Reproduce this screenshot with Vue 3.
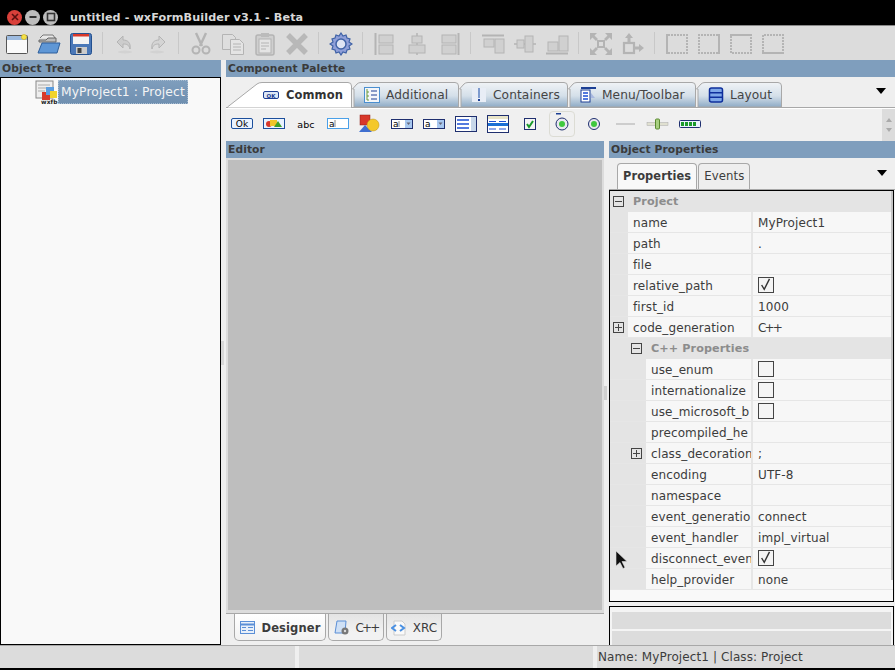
<template>
  <div class="win">
    <div class="titlebar">
      <span class="wbtn close"><svg width="14" height="14" viewBox="0 0 14 14"><path d="M4 4l6 6M10 4l-6 6" stroke="#5a0f0f" stroke-width="1.6"/></svg></span>
      <span class="wbtn"><svg width="14" height="14" viewBox="0 0 14 14"><path d="M3.5 7h7" stroke="#333" stroke-width="2"/></svg></span>
      <span class="wbtn"><svg width="14" height="14" viewBox="0 0 14 14"><rect x="3.5" y="3.5" width="7" height="7" fill="none" stroke="#333" stroke-width="1.6"/></svg></span>
      <span class="title">untitled - wxFormBuilder v3.1 - Beta</span>
    </div>

    <div class="toolbar">
      <template v-for="(t, i) in tools" :key="i">
        <span v-if="t === '|'" class="sep"></span>
        <span v-else class="tool">
          <svg width="24" height="24" viewBox="0 0 24 24" v-html="toolIcons[t]"></svg>
        </span>
      </template>
    </div>

    <div class="main">
      <div class="left">
        <div class="phead">Object Tree</div>
        <div class="tree">
          <div class="tree-row">
            <svg class="tree-ico" width="24" height="24" viewBox="0 0 24 24">
              <rect x="1" y="1" width="17" height="17" fill="#eee" stroke="#888"/>
              <path d="M3 5h12M3 8h12M3 11h7" stroke="#aaa"/>
              <rect x="7" y="12" width="8" height="8" fill="#d8382a"/>
              <rect x="11" y="7" width="8" height="8" fill="#5a9de0"/>
              <rect x="15" y="11" width="7" height="7" fill="#f2d42a"/>
              <text x="6" y="24" font-size="6" font-weight="bold" font-family="DejaVu Sans" fill="#222">wxfb</text>
            </svg>
            <span class="tree-label">MyProject1 : Project</span>
          </div>
        </div>
      </div>

      <div class="vsplit"><i></i></div>

      <div class="right">
        <div class="phead">Component Palette</div>
        <div class="ptabs">
          <div v-for="t in paletteTabs" :key="t.name" class="ptab" :class="{ on: t.on }" :style="{ width: t.w + 'px' }">
            <svg class="tabshape" :width="t.w" height="27" :viewBox="`0 0 ${t.w} 27`">
              <defs>
                <linearGradient id="tabg" x1="0" y1="0" x2="0" y2="1">
                  <stop offset="0" stop-color="#f0f3f6"/>
                  <stop offset="0.55" stop-color="#d4dfe9"/>
                  <stop offset="1" stop-color="#8eabc6"/>
                </linearGradient>
              </defs>
              <path v-if="t.on" :d="`M0.5 26 L30 3 Q32 1.5 35 1.5 H${t.w - 4} Q${t.w - 0.5} 1.5 ${t.w - 0.5} 5 V27 H0.5 Z`" fill="#fff" stroke="#a8a8a8"/>
              <path v-else :d="`M0.5 8 L5 3 Q6.5 1.5 9 1.5 H${t.w - 4} Q${t.w - 0.5} 1.5 ${t.w - 0.5} 5 V26 H2 V8 Z`" fill="url(#tabg)" stroke="#a8a8a8"/>
            </svg>
            <svg class="tabico" width="16" height="16" viewBox="0 0 16 16" v-html="t.icon"></svg>
            <span class="tabtxt">{{ t.name }}</span>
          </div>
          <span class="tri pal-tri"></span>
        </div>
        <div class="palette">
          <span v-for="(p, i) in palIcons" :key="i" class="pal" :class="{ pressed: i === 10 }">
            <svg width="24" height="24" viewBox="-1 0 24 24" v-html="p"></svg>
          </span>
          <div class="palscroll"><span class="up"></span><span class="down"></span></div>
        </div>

        <div class="lower">
          <div class="editor">
            <div class="phead">Editor</div>
            <div class="canvas"></div>
            <div class="btabs">
              <div class="btab on" style="width: 92px">
                <svg width="16" height="14" viewBox="0 0 16 14"><rect x=".5" y=".5" width="14" height="12" fill="#e8f0fa" stroke="#5b8fd6"/><path d="M.5 3.5h14" stroke="#5b8fd6" stroke-width="2"/><path d="M2 6.5h4M2 9.5h4M8 6.5h5M8 9.5h5" stroke="#5b8fd6"/></svg>
                <b>Designer</b>
              </div>
              <div class="btab" style="width: 56px">
                <svg width="16" height="16" viewBox="0 0 16 16"><path d="M3 1h9l-1 12H1z" fill="#cfe0f5" stroke="#5b8fd6"/><circle cx="11" cy="11" r="3.5" fill="#777"/><circle cx="11" cy="11" r="1.2" fill="#ddd"/></svg>
                <span class="narrow">C++</span>
              </div>
              <div class="btab" style="width: 56px">
                <svg width="16" height="16" viewBox="0 0 16 16"><path d="M3 1h8l3 3v11H3z" fill="#fafafa" stroke="#ccc"/><path d="M5 5L1 8l4 3M9 5l4 3-4 3" fill="none" stroke="#4a90e2" stroke-width="2"/></svg>
                <span>XRC</span>
              </div>
            </div>
          </div>

          <div class="hsplit"><i></i></div>

          <div class="props">
            <div class="phead">Object Properties</div>
            <div class="prop-tabs">
              <div class="ptb on">Properties</div>
              <div class="ptb">Events</div>
              <span class="tri prop-tri"></span>
            </div>
            <div class="grid">
              <div v-for="r in rows" :key="r.name" class="row" :class="[`lv${r.lv}`, { cat: r.cat }]">
                <span class="gut">
                  <span v-if="r.exp" class="exp">
                    <svg width="11" height="11" viewBox="0 0 11 11"><rect x=".5" y=".5" width="10" height="10" fill="none" stroke="#444"/><path d="M2 5.5h7" stroke="#444"/><path v-if="r.exp === '+'" d="M5.5 2v7" stroke="#444"/></svg>
                  </span>
                </span>
                <span class="name">{{ r.name }}</span>
                <span v-if="!r.cat" class="val" :class="{ narrow: r.val === 'C++' }">
                  <span v-if="r.chk !== undefined" class="chk">
                    <svg v-if="r.chk" width="16" height="16" viewBox="0 0 16 16"><path d="M3 8l3 5 6-12" fill="none" stroke="#333" stroke-width="1.6"/></svg>
                  </span>
                  <template v-else>{{ r.val }}</template>
                </span>
              </div>
              <i class="gridbar"></i>
            </div>
            <div class="desc">
              <div class="d1"></div>
              <div class="d2"></div>
            </div>
          </div>
        </div>
      </div>
    </div>

    <div class="status">
      <div class="sb s1"></div>
      <div class="sb s2"></div>
      <div class="sb s3">Name: MyProject1 | Class: Project</div>
    </div>

    <svg class="cursor" width="14" height="20" viewBox="0 0 14 20"><path d="M1 1v15l4-3.5 3 6 2-1-3-6h5z" fill="#111" stroke="#ddd" stroke-width=".6"/></svg>
  </div>
</template>

<script setup>
const g = '#b4b4b4'
const align = (inner) => `<g fill="#d0d0d0" stroke="${g}">${inner}</g>`

const toolIcons = {
  new: `<rect x="1.5" y="3.5" width="21" height="18" rx="1" fill="#fafafa" stroke="#555"/><rect x="2" y="4" width="20" height="4" fill="#9dbbe0"/><circle cx="19" cy="5" r="2.6" fill="#f4e04a" stroke="#c9a800" stroke-width=".5"/>`,
  open: `<path d="M3 6l3-3h10l2 3" fill="#e8e8e8" stroke="#777"/><path d="M2 8h7l2-2h8v4H2z" fill="#bbb" stroke="#666"/><path d="M5 11h18l-3 10H1z" fill="#5f97d6" stroke="#2e5f9c"/>`,
  save: `<rect x="1.5" y="1.5" width="21" height="21" rx="2" fill="#4a78b8" stroke="#23508f"/><rect x="4" y="2" width="16" height="10" fill="#f4f4f4"/><rect x="4" y="2" width="16" height="2.5" fill="#d8382a"/><rect x="7" y="15" width="11" height="7" fill="#ccc"/><rect x="8.5" y="16" width="4" height="5" fill="#444"/>`,
  undo: `<path d="M10 4L4 10l6 6v-4c4 0 6 1 7 5 1-6-2-9-7-9z" fill="#ccc" stroke="${g}"/><ellipse cx="12" cy="20" rx="7" ry="1.5" fill="#d2d2d2"/>`,
  redo: `<path d="M14 4l6 6-6 6v-4c-4 0-6 1-7 5-1-6 2-9 7-9z" fill="#d4d4d4" stroke="${g}"/><ellipse cx="12" cy="20" rx="7" ry="1.5" fill="#d2d2d2"/>`,
  cut: `<path d="M7 1l6 13M17 1l-6 13" stroke="${g}" stroke-width="2.4" fill="none"/><circle cx="7" cy="18" r="3.5" fill="none" stroke="${g}" stroke-width="2"/><circle cx="17" cy="18" r="3.5" fill="none" stroke="${g}" stroke-width="2"/>`,
  copy: `<path d="M1.5 2.5h10l3 3v12h-13z" fill="#dedede" stroke="${g}"/><path d="M9.5 7.5h9l4 4v11h-13z" fill="#e4e4e4" stroke="${g}"/><path d="M12 12h8M12 15h8M12 18h8" stroke="${g}"/>`,
  paste: `<rect x="3" y="3" width="18" height="20" rx="2" fill="#cfcfcf" stroke="${g}" stroke-width="1.5"/><rect x="6" y="7" width="12" height="14" fill="#e4e4e4" stroke="${g}"/><rect x="8" y="1" width="8" height="4" fill="#bbb"/><path d="M8 11h8M8 14h8M8 17h5" stroke="${g}"/>`,
  del: `<path d="M3 3l18 18M21 3L3 21" stroke="#b8b8b8" stroke-width="5.4"/>`,
  gear: `<path d="M12 1l2 3 3-1 1 3 3 1-1 3 3 2-3 2 1 3-3 1-1 3-3-1-2 3-2-3-3 1-1-3-3-1 1-3-3-2 3-2-1-3 3-1 1-3 3 1z" fill="#8f9fd8" stroke="#3f62a6" stroke-width="1.2"/><circle cx="12" cy="12" r="5" fill="#dde3f3" stroke="#3f62a6" stroke-width="1.5"/>`,
  al1: align(`<path d="M2.5 1v22" stroke-width="2"/><rect x="6" y="3" width="14" height="8"/><rect x="6" y="13" width="14" height="9"/>`),
  al2: align(`<path d="M12 1v22" stroke-width="1.5"/><rect x="7" y="4" width="10" height="7"/><rect x="4" y="13" width="16" height="8"/>`),
  al3: align(`<path d="M21.5 1v22" stroke-width="2"/><rect x="5" y="3" width="14" height="8"/><rect x="5" y="13" width="14" height="9"/>`),
  al4: align(`<path d="M1 3.5h22" stroke-width="2"/><rect x="3" y="7" width="10" height="8"/><rect x="14" y="7" width="9" height="14"/>`),
  al5: align(`<path d="M1 12h22" stroke-width="1.5"/><rect x="4" y="8" width="7" height="8"/><rect x="12" y="4" width="8" height="16"/>`),
  al6: align(`<path d="M1 21.5h22" stroke-width="2"/><rect x="3" y="10" width="10" height="9"/><rect x="14" y="4" width="9" height="15"/>`),
  expand: `<rect x="9" y="9" width="6" height="6" fill="none" stroke="${g}" stroke-width="2"/><path d="M1 1h7L5.5 3.5 9 7 7 9 3.5 5.5 1 8zM23 1h-7l2.5 2.5L15 7l2 2 3.5-3.5L23 8zM1 23h7l-2.5-2.5L9 17l-2-2-3.5 3.5L1 16zM23 23h-7l2.5-2.5L15 17l2-2 3.5 3.5L23 16z" fill="${g}"/>`,
  stretch: `<rect x="3" y="11" width="10" height="10" fill="none" stroke="${g}" stroke-width="2.2"/><path d="M8 1l4 5H9.5v4h-3V6H4zM23 16l-5 4v-2.5h-4v-3h4V12z" fill="${g}"/>`,
  bl: `<path d="M2 2v20" fill="none" stroke="${g}" stroke-width="2"/><path d="M3 3h19v18H3" fill="none" stroke="${g}" stroke-width="2" stroke-dasharray="2 1"/>`,
  br: `<path d="M22 2v20" fill="none" stroke="${g}" stroke-width="2"/><path d="M21 3H2v18h19" fill="none" stroke="${g}" stroke-width="2" stroke-dasharray="2 1"/>`,
  bt: `<path d="M1 3h22" fill="none" stroke="${g}" stroke-width="2"/><path d="M2 4v17h20V4" fill="none" stroke="${g}" stroke-width="2" stroke-dasharray="2 1"/>`,
  bb: `<path d="M1 21h22" fill="none" stroke="${g}" stroke-width="2"/><path d="M2 20V3h20v17" fill="none" stroke="${g}" stroke-width="2" stroke-dasharray="2 1"/>`
}

const tools = ['new', 'open', 'save', '|', 'undo', 'redo', '|', 'cut', 'copy', 'paste', 'del', '|', 'gear', '|', 'al1', 'al2', 'al3', '|', 'al4', 'al5', 'al6', '|', 'expand', 'stretch', '|', 'bl', 'br', 'bt', 'bb']

const paletteTabs = [
  { name: 'Common', w: 125, on: true, icon: `<rect x=".5" y="4.5" width="15" height="7" rx="1.5" fill="#dde8f6" stroke="#1c3f94"/><text x="8" y="10.5" font-size="5.5" text-anchor="middle" font-family="DejaVu Sans" fill="#1c3f94">OK</text>` },
  { name: 'Additional', w: 107, icon: `<rect x=".5" y=".5" width="15" height="15" fill="#f4f6fa" stroke="#4a8fd0"/><path d="M3 2v11h2M3 5h2M3 9h2" fill="none" stroke="#6a9a3a"/><path d="M7 4h6M7 8h6M7 12h6" stroke="#1c3f94"/>` },
  { name: 'Containers', w: 109, icon: `<rect x="1" y="1" width="14" height="14" fill="#e8edf6"/><path d="M8 1v10" stroke="#5b7fc0" stroke-width="1.5"/><path d="M7 12h2v2H7z" fill="#1c3f94"/>` },
  { name: 'Menu/Toolbar', w: 128, icon: `<rect x="1" y="0" width="16" height="2" fill="#1c3f94"/><rect x="1" y="3" width="9" height="12" fill="#fff" stroke="#1c3f94"/><path d="M3 6h5M3 9h5M3 12h5" stroke="#1c4fd4" stroke-width="1.5"/><path d="M11 6l4 5h-4z" fill="#a8b8e0"/>` },
  { name: 'Layout', w: 86, icon: `<rect x="1.5" y="1" width="13" height="14" rx="2" fill="#7fa8e8" stroke="#0f2f9c" stroke-width="1.5"/><path d="M2 5.7h12M2 10.3h12" stroke="#0f2f9c" stroke-width="1.5"/>` }
]

const dk = '#1f2f6f'
const palIcons = [
  `<rect x=".5" y="6.5" width="21" height="10" rx="1.5" fill="#eaf3ff" stroke="#1c4f9c"/><text x="11" y="15" font-size="9" text-anchor="middle" font-family="DejaVu Sans">Ok</text>`,
  `<rect x=".5" y="6.5" width="21" height="10" fill="#eaf3ff" stroke="#1c4f9c"/><circle cx="6" cy="12" r="3" fill="#d8382a"/><rect x="7" y="8" width="7" height="6" fill="#f2c42a"/><path d="M11 15l4-6 4 6z" fill="#3fa02a"/>`,
  `<text x="11" y="15.5" font-size="9.5" text-anchor="middle" font-family="DejaVu Sans">abc</text>`,
  `<rect x=".5" y="6.5" width="21" height="10" fill="#fff" stroke="#4aa0e8"/><text x="2" y="15" font-size="9" font-family="DejaVu Sans">a</text><path d="M8 8v7" stroke="#888"/>`,
  `<rect x="1" y="3" width="10" height="10" fill="#d8382a" stroke="#8c1e14" stroke-width=".5"/><path d="M0 20l6-7 7 7z" fill="#3f6fd0"/><circle cx="14" cy="13" r="6" fill="#f4c82a" stroke="#b88f10" stroke-width=".5"/>`,
  `<rect x=".5" y="7.5" width="21" height="9" fill="#fff" stroke="${dk}"/><text x="2" y="15" font-size="9" font-family="DejaVu Sans">a</text><path d="M8 9v6" stroke="#888"/><rect x="14" y="8" width="7" height="8" fill="#a8c8f0"/><path d="M15.5 10.5h4l-2 2.5z" fill="#667"/>`,
  `<rect x=".5" y="7.5" width="21" height="9" fill="#fff" stroke="${dk}"/><text x="2" y="15" font-size="9" font-family="DejaVu Sans">a</text><rect x="14" y="8" width="7" height="8" fill="#a8c8f0"/><path d="M15.5 10.5h4l-2 2.5z" fill="#667"/>`,
  `<rect x=".5" y="4.5" width="21" height="15" fill="#fff" stroke="${dk}"/><path d="M2 8h12M2 12h12M2 16h12" stroke="#1c4fd4" stroke-width="1.3"/><rect x="16" y="5" width="5" height="14" fill="#c8d8ea"/>`,
  `<rect x=".5" y="3.5" width="21" height="17" fill="#fff" stroke="${dk}"/><rect x="1" y="4" width="20" height="3" fill="#e8e4c8"/><rect x="1" y="11" width="20" height="3" fill="#1c6fd4"/><path d="M2 9.5h7M12 9.5h7M2 17h7M12 17h7" stroke="#1c4fd4"/>`,
  `<rect x="5.5" y="6.5" width="11" height="11" fill="#f4f4f4" stroke="${dk}"/><path d="M8 12l2 3 4-6" fill="none" stroke="#1a9a2a" stroke-width="2"/>`,
  `<rect x="5" y="1" width="5" height="1.5" fill="#1c3f94"/><circle cx="11" cy="12" r="6" fill="#e8e8f0" stroke="${dk}"/><circle cx="11" cy="12" r="3" fill="#3fc83f"/>`,
  `<circle cx="11" cy="12" r="5.5" fill="#e8e8f0" stroke="${dk}"/><circle cx="11" cy="12" r="3" fill="#3fc83f"/>`,
  `<path d="M1 12h19" stroke="#aaa"/>`,
  `<rect x="0" y="10.5" width="21" height="3" fill="#e0e0d0" stroke="#aaa" stroke-width=".5"/><rect x="8.5" y="7" width="4" height="10" rx="1" fill="#a8d080" stroke="#5a8a30"/>`,
  `<rect x=".5" y="8.5" width="21" height="7" rx="1" fill="#eaf3ff" stroke="${dk}"/><rect x="2" y="10" width="3" height="4" fill="#1a9a2a"/><rect x="6" y="10" width="3" height="4" fill="#1a9a2a"/><rect x="10" y="10" width="3" height="4" fill="#1a9a2a"/><rect x="14" y="10" width="3" height="4" fill="#1a9a2a"/>`
]

const rows = [
  { name: 'Project', lv: 0, cat: true, exp: '-' },
  { name: 'name', lv: 1, val: 'MyProject1' },
  { name: 'path', lv: 1, val: '.' },
  { name: 'file', lv: 1, val: '' },
  { name: 'relative_path', lv: 1, chk: true },
  { name: 'first_id', lv: 1, val: '1000' },
  { name: 'code_generation', lv: 1, val: 'C++', exp: '+' },
  { name: 'C++ Properties', lv: 1, cat: true, exp: '-' },
  { name: 'use_enum', lv: 2, chk: false },
  { name: 'internationalize', lv: 2, chk: false },
  { name: 'use_microsoft_b', lv: 2, chk: false },
  { name: 'precompiled_he', lv: 2, val: '' },
  { name: 'class_decoration', lv: 2, val: ';', exp: '+' },
  { name: 'encoding', lv: 2, val: 'UTF-8' },
  { name: 'namespace', lv: 2, val: '' },
  { name: 'event_generatio', lv: 2, val: 'connect' },
  { name: 'event_handler', lv: 2, val: 'impl_virtual' },
  { name: 'disconnect_even', lv: 2, chk: true },
  { name: 'help_provider', lv: 2, val: 'none' }
]
</script>

<style>
html, body { margin: 0; background: #000; }
</style>

<style scoped>
.win {
  position: relative;
  width: 895px;
  height: 670px;
  overflow: hidden;
  display: flex;
  flex-direction: column;
  background: #dcdcdc;
  color: #3c3c3c;
  font-family: "DejaVu Sans", sans-serif;
  font-size: 12px;
  letter-spacing: 0.1px;
}

.titlebar {
  flex: 0 0 26px;
  height: 26px;
  background: #000;
  display: flex;
  align-items: center;
  gap: 3px;
  padding: 9px 0 0 7px;
  box-sizing: border-box;
  border-bottom: 1px solid #888;
}
.wbtn {
  width: 15px;
  height: 15px;
  border-radius: 50%;
  background: #bdbdbd;
  display: flex;
  align-items: center;
  justify-content: center;
}
.wbtn.close { background: #d9403a; }
.title {
  margin-left: 9px;
  color: #d8d8d8;
  font-weight: bold;
  font-size: 11.2px;
}

.toolbar {
  flex: 0 0 34px;
  height: 34px;
  display: flex;
  align-items: center;
  padding-left: 1px;
  box-sizing: border-box;
  background: #dcdcdc;
}
.tool {
  flex: 0 0 32px;
  width: 32px;
  display: flex;
  justify-content: center;
  padding-top: 1px;
}
.sep {
  flex: 0 0 12px;
  height: 22px;
  position: relative;
}
.sep::after {
  content: "";
  position: absolute;
  left: 5px;
  top: 0;
  width: 1px;
  height: 100%;
  background: #c8c8c8;
}

.main {
  flex: 0 0 585px;
  display: flex;
  height: 585px;
}

.phead {
  height: 17px;
  line-height: 18px;
  background: #7f9ebd;
  color: #3a3a3a;
  font-weight: bold;
  font-size: 10.7px;
  padding-left: 2px;
}

.left {
  width: 221px;
  display: flex;
  flex-direction: column;
}
.tree {
  flex: 1;
  border: 1px solid #000;
  background: #f9f9f9;
  padding: 2px 0 0 34px;
}
.tree-row {
  display: flex;
  align-items: center;
  height: 24px;
}
.tree-ico { flex: none; }
.tree-label {
  height: 24px;
  line-height: 25px;
  background: linear-gradient(#7f9ebd, #6f8fb0);
  color: #f4f4f4;
  font-size: 12.3px;
  padding: 0 3px 0 3px;
  margin-left: -1px;
  outline: 1px dotted #a8bdd2;
  outline-offset: -1px;
  white-space: nowrap;
}

.vsplit {
  flex: 0 0 5px;
  background: #eee;
  display: flex;
  align-items: center;
}
.vsplit i {
  width: 3px;
  height: 24px;
  background: #d8d8d8;
}

.right {
  flex: 1;
  min-width: 0;
  display: flex;
  flex-direction: column;
  background: #efefef;
}

.ptabs {
  position: relative;
  height: 31px;
  display: flex;
  padding: 4px 0 0 1px;
  box-sizing: border-box;
  border-bottom: 1px solid #a8a8a8;
  background: #efefef;
}
.ptab {
  position: relative;
  flex: none;
  height: 27px;
  display: flex;
  align-items: center;
  padding-left: 12px;
  box-sizing: border-box;
  font-size: 12.2px;
  color: #444;
}
.ptab.on {
  padding-left: 36px;
  font-weight: bold;
  color: #333;
  font-size: 11.5px;
}
.tabshape {
  position: absolute;
  left: 0;
  top: 0;
}
.tabico {
  position: relative;
  margin-right: 6px;
}
.ptab.on .tabico { margin-right: 7px; }
.tabtxt { position: relative; }
.tri {
  position: absolute;
  width: 0;
  height: 0;
  border-left: 5px solid transparent;
  border-right: 5px solid transparent;
  border-top: 6px solid #000;
}
.pal-tri { right: 9px; top: 11px; }

.palette {
  position: relative;
  height: 33px;
  display: flex;
  align-items: center;
  background: #f0f0f0;
  border-top: 1px solid #fff;
  padding-bottom: 2px;
  box-sizing: border-box;
}
.pal {
  flex: 0 0 32px;
  width: 32px;
  display: flex;
  justify-content: center;
}
.pal.pressed svg {
  outline: 1px solid #dcdcd4;
  border-radius: 3px;
}
.palscroll {
  position: absolute;
  right: 0;
  top: 0;
  bottom: 0;
  width: 13px;
  background: #dcdcdc;
  display: flex;
  flex-direction: column;
  align-items: center;
  justify-content: center;
  gap: 6px;
}
.up, .down {
  width: 0;
  height: 0;
  border-left: 3px solid transparent;
  border-right: 3px solid transparent;
}
.up { border-bottom: 4px solid #aaa; }
.down { border-top: 4px solid #aaa; }

.lower {
  flex: 1;
  min-height: 0;
  display: flex;
}
.editor {
  width: 378px;
  display: flex;
  flex-direction: column;
}
.canvas {
  height: 455px;
  background: #bebebe;
  border: 2px solid #dcdcdc;
  border-bottom-width: 3px;
  box-sizing: border-box;
}
.btabs {
  flex: 1;
  display: flex;
  align-items: flex-start;
  padding-left: 8px;
  background: #efefef;
  border-top: 1px solid #a8a8a8;
  gap: 2px;
}
.btab {
  flex: none;
  height: 27px;
  box-sizing: border-box;
  border: 1px solid #a8a8a8;
  border-top: none;
  border-radius: 0 0 5px 5px;
  padding-top: 1px;
  display: flex;
  align-items: center;
  justify-content: center;
  gap: 6px;
  background: linear-gradient(#e4e4e4, #f2f2f2 70%);
  font-size: 12px;
}
.btab.on {
  background: linear-gradient(#fff, #f2f2f2);
  gap: 6px;
}
.btab b {
  font-size: 11.5px;
}
.narrow { letter-spacing: -1.9px; }

.hsplit {
  flex: 0 0 5px;
  display: flex;
  align-items: center;
  background: #efefef;
}
.hsplit i {
  width: 3px;
  height: 14px;
  background: #d0d0d0;
}

.props {
  flex: 1;
  min-width: 0;
  display: flex;
  flex-direction: column;
}
.prop-tabs {
  position: relative;
  height: 32px;
  display: flex;
  align-items: flex-end;
  padding-left: 8px;
  gap: 1px;
  box-sizing: border-box;
  border-bottom: 1px solid #a8a8a8;
  background: #efefef;
}
.ptb {
  height: 26px;
  line-height: 25px;
  box-sizing: border-box;
  border: 1px solid #a8a8a8;
  border-bottom: none;
  border-radius: 4px 4px 0 0;
  padding: 0 5px;
  font-size: 11.7px;
  background: #eee;
}
.ptb.on {
  font-weight: bold;
  background: #f8f8f8;
  font-size: 11.4px;
  padding: 0 5px;
}
.prop-tri { right: 8px; top: 12px; }

.grid {
  position: relative;
  height: 412px;
  box-sizing: border-box;
  border: 1px solid #000;
  margin-right: 1px;
  background: #f9f9f9;
  overflow: hidden;
}
.gridbar {
  position: absolute;
  right: 0;
  top: 0;
  width: 2px;
  height: 389px;
  background: #c4c4c4;
}
.row {
  display: flex;
  height: 21px;
  box-sizing: border-box;
  border-bottom: 1px solid #e6e6e6;
  line-height: 20px;
  font-size: 12px;
  background: #f7f7f7;
}
.row.cat {
  background: #e4e4e4;
  border-bottom-color: #e4e4e4;
  font-weight: bold;
  font-size: 11.2px;
  color: #8c8c8c;
}
.gut {
  flex: none;
  background: #e4e4e4;
  display: flex;
  align-items: center;
  padding-left: 3px;
  box-sizing: border-box;
}
.lv0 .gut { width: 18px; }
.lv1 .gut { width: 18px; }
.lv2 .gut { width: 36px; padding-left: 21px; }
.lv1.cat .gut { width: 36px; padding-left: 21px; }
.exp { display: flex; }
.name {
  flex: none;
  box-sizing: border-box;
  padding: 1px 0 0 5px;
  overflow: hidden;
  white-space: nowrap;
  border-right: 2px solid #e6e6e6;
}
.lv1 .name { width: 125px; }
.lv2 .name { width: 107px; }
.cat .name { border: none; width: auto; }
.val {
  flex: 1;
  padding: 2px 0 0 5px;
  display: flex;
  align-items: center;
  white-space: nowrap;
}
.chk {
  width: 16px;
  height: 16px;
  box-sizing: border-box;
  border: 1px solid #444;
  background: #f4f4f4;
  display: flex;
  align-items: center;
  justify-content: center;
  margin-top: -2px;
}

.desc {
  margin-top: 4px;
  flex: 1;
  box-sizing: border-box;
  border: 1px solid #000;
  border-bottom: none;
  margin-right: 1px;
  background: #f4f4f4;
  padding: 5px 2px 0;
  display: flex;
  flex-direction: column;
  gap: 2px;
}
.d1 { height: 17px; background: #dcdcdc; }
.d2 { flex: 1; background: #dcdcdc; }

.status {
  flex: 0 0 25px;
  height: 25px;
  display: flex;
  background: #dcdcdc;
  border-top: 1px solid #a8a8a8;
  box-sizing: border-box;
  border-bottom: 2px solid #000;
}
.sb {
  box-sizing: border-box;
  height: 100%;
  line-height: 23px;
  border-right: 4px solid #efefef;
  font-size: 12px;
}
.s1 { width: 299px; }
.s2 { width: 298px; }
.s3 { flex: 1; border-right: none; padding-left: 1px; }

.cursor {
  position: absolute;
  left: 615px;
  top: 550px;
}
</style>
